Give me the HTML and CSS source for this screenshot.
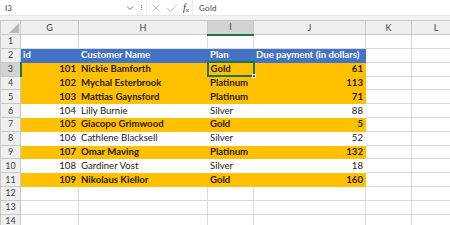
FILE: index.html
```html
<!DOCTYPE html>
<html lang="en">

<head>
    <meta charset="UTF-8">
    <title>Customers - Sheet1</title>
    <link rel="stylesheet" href="styles.css">
</head>

<body>

    <!-- Formula bar -->
    <div class="formula-bar">
        <div class="name-box">
            <span>I3</span>
            <svg class="chevron" width="8" height="6" viewBox="0 0 8 6">
                <path d="M1 1.5 L4 4.5 L7 1.5" fill="none" stroke="#777" stroke-width="1" />
            </svg>
        </div>
        <div class="grip">
            <span></span><span></span><span></span>
        </div>
        <div class="fx-buttons">
            <svg width="10" height="10" viewBox="0 0 10 10">
                <path d="M1.5 1.5 L8.5 8.5 M8.5 1.5 L1.5 8.5" stroke="#c4c4c4" stroke-width="1" />
            </svg>
            <svg width="12" height="10" viewBox="0 0 12 10">
                <path d="M1 5 L4.5 8.5 L11 1.5" fill="none" stroke="#c4c4c4" stroke-width="1" />
            </svg>
            <span class="fx">f<sub>x</sub></span>
        </div>
        <div class="formula-input">Gold</div>
    </div>

    <div class="gap"></div>

    <table class="sheet" id="sheet">
        <colgroup>
            <col class="c-row">
            <col class="c-g">
            <col class="c-h">
            <col class="c-i">
            <col class="c-j">
            <col class="c-k">
            <col class="c-l">
        </colgroup>
        <thead>
            <tr>
                <th class="corner">
                    <svg width="10" height="10" viewBox="0 0 10 10">
                        <path d="M10 0 L10 10 L0 10 Z" fill="#b8b8b8" />
                    </svg>
                </th>
                <th>G</th>
                <th>H</th>
                <th class="active-col">I</th>
                <th>J</th>
                <th>K</th>
                <th>L</th>
            </tr>
        </thead>
        <tbody id="rows"></tbody>
    </table>

    <script>
        const customers = [
            [101, 'Nickie Bamforth', 'Gold', 61],
            [102, 'Mychal Esterbrook', 'Platinum', 113],
            [103, 'Mattias Gaynsford', 'Platinum', 71],
            [104, 'Lilly Burnie', 'Silver', 88],
            [105, 'Giacopo Grimwood', 'Gold', 5],
            [106, 'Cathlene Blacksell', 'Silver', 52],
            [107, 'Omar Maving', 'Platinum', 132],
            [108, 'Gardiner Vost', 'Silver', 18],
            [109, 'Nikolaus Kiellor', 'Gold', 160]
        ];

        const tbody = document.getElementById('rows');
        let html = '';

        // row 1 - empty
        html += '<tr><th class="rownum">1</th><td></td><td></td><td></td><td></td><td></td><td></td></tr>';

        // row 2 - header
        html += '<tr class="head"><th class="rownum">2</th>' +
            '<td class="hd">id</td><td class="hd">Customer Name</td><td class="hd">Plan</td>' +
            '<td class="hd">Due payment (in dollars)</td><td></td><td></td></tr>';

        customers.forEach((c, i) => {
            const rowNo = i + 3;
            const cls = c[2] === 'Silver' ? 'plain' : 'hot';
            const active = rowNo === 3;
            html += `<tr class="${cls}">` +
                `<th class="rownum${active ? ' active-row' : ''}">${rowNo}</th>` +
                `<td class="num">${c[0]}</td>` +
                `<td>${c[1]}</td>` +
                `<td${active ? ' class="selected"' : ''}>${c[2]}${active ? '<span class="handle"></span>' : ''}</td>` +
                `<td class="num">${c[3]}</td>` +
                `<td></td><td></td></tr>`;
        });

        for (let r = 12; r <= 14; r++) {
            html += `<tr><th class="rownum">${r}</th><td></td><td></td><td></td><td></td><td></td><td></td></tr>`;
        }

        tbody.innerHTML = html;
    </script>

</body>

</html>
```

FILE: styles.css
```css
:root {
    --grid: #dadada;
    --head-bg: #efefef;
    --head-line: #c8c8c8;
    --blue: #4472c4;
    --orange: #ffc000;
    --green: #217346;
    --text: #1a1a1a;
}

* {
    box-sizing: border-box;
}

body {
    margin: 0;
    background: #ffffff;
    font-family: Lato, "Open Sans", sans-serif;
    color: var(--text);
    overflow: hidden;
}

/* formula bar */

.formula-bar {
    display: flex;
    align-items: center;
    height: 15px;
    background: #ffffff;
    font-size: 8px;
    color: #444;
}

.name-box {
    display: flex;
    align-items: center;
    justify-content: space-between;
    width: 137px;
    height: 100%;
    padding: 0 3px 0 5px;
}

.grip {
    display: flex;
    flex-direction: column;
    gap: 1px;
    padding: 0 4px;
}

.grip span {
    width: 1px;
    height: 1px;
    background: #777;
}

.fx-buttons {
    display: flex;
    align-items: center;
    gap: 5px;
    width: 46px;
    height: 100%;
    padding-left: 4px;
    border-left: 1px solid #ececec;
}

.fx {
    font-family: "Liberation Serif", serif;
    font-style: italic;
    font-size: 10px;
    color: #333;
}

.fx sub {
    font-size: 7px;
    vertical-align: -1px;
}

.formula-input {
    flex: 1;
    height: 100%;
    display: flex;
    align-items: center;
    padding-left: 6px;
    border-left: 1px solid #ececec;
    letter-spacing: 0.3px;
}

.gap {
    height: 5px;
    background: #f3f3f3;
    border-top: 1px solid #e6e6e6;
}

/* sheet */

.sheet {
    border-collapse: collapse;
    table-layout: fixed;
    width: 460px;
    font-size: 9.6px;
}

.c-row { width: 20px; }
.c-g { width: 58px; }
.c-h { width: 129px; }
.c-i { width: 46px; }
.c-j { width: 112px; }
.c-k { width: 46px; }
.c-l { width: 49px; }

.sheet th,
.sheet td {
    height: 13.8px;
    padding: 0 2px;
    border: 1px solid var(--grid);
    white-space: nowrap;
    overflow: hidden;
    line-height: 12px;
}

.sheet thead th {
    height: 14px;
    background: var(--head-bg);
    border-color: var(--head-line);
    font-weight: normal;
    color: #444;
    font-size: 9px;
    text-align: center;
}

.sheet thead th.corner {
    text-align: right;
    vertical-align: bottom;
    padding: 0 1px 1px 0;
}

.corner svg {
    display: block;
    margin-left: auto;
}

.sheet thead th.active-col {
    background: #d2d2d2;
    border-bottom: 2px solid var(--green);
    color: #1e5c38;
}

.rownum {
    background: var(--head-bg);
    font-weight: normal;
    color: #444;
    font-size: 9px;
    text-align: center;
    border-color: var(--head-line) !important;
}

.rownum.active-row {
    background: #d2d2d2;
    border-right: 2px solid var(--green) !important;
}

.head .hd {
    background: var(--blue);
    color: #ffffff;
    font-weight: bold;
    border-color: var(--blue);
}

.hot td:nth-child(-n+5) {
    background: var(--orange);
    border-color: var(--orange);
    font-weight: bold;
    color: #2a2000;
}

.plain td {
    font-weight: normal;
}

.plain td:nth-child(-n+5) {
    border-color: #ffffff;
}

.num {
    text-align: right;
}

.sheet td.selected {
    position: relative;
    overflow: visible;
    border: 2px solid var(--green) !important;
}

.handle {
    position: absolute;
    right: -3px;
    bottom: -3px;
    width: 4px;
    height: 4px;
    background: var(--green);
    border: 1px solid #ffffff;
}
```
